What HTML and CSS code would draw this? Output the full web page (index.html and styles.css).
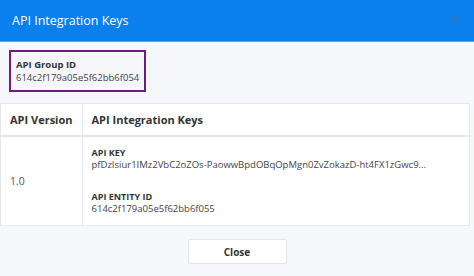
FILE: index.html
```html
<!DOCTYPE html>
<html>
<head>
<meta charset="utf-8">
<link rel="stylesheet" href="styles.css">
</head>
<body>
<div class="modal">
  <div class="modal-header">
    <span class="modal-title">API Integration Keys</span>
    <svg class="close-x" width="9" height="9" viewBox="0 0 9 9"><path d="M1 1 L8 8 M8 1 L1 8" stroke="#3f6ea8" stroke-width="1.6" stroke-linecap="round"/></svg>
  </div>
  <div class="modal-body">
    <div class="group-box">
      <div class="label">API Group ID</div>
      <div class="value">614c2f179a05e5f62bb6f054</div>
    </div>
    <table class="keys-table">
      <thead>
        <tr><th class="col-ver">API Version</th><th>API Integration Keys</th></tr>
      </thead>
      <tbody>
        <tr>
          <td class="col-ver">1.0</td>
          <td class="keys-cell">
            <div class="label">API KEY</div>
            <div class="value">pfDzIsiur1IMz2VbC2oZOs-PaowwBpdOBqOpMgn0ZvZokazD-ht4FX1zGwc9...</div>
            <div class="label entity">API ENTITY ID</div>
            <div class="value">614c2f179a05e5f62bb6f055</div>
          </td>
        </tr>
      </tbody>
    </table>
  </div>
  <div class="modal-footer">
    <button class="btn-close">Close</button>
  </div>
</div>
</body>
</html>
```
FILE: styles.css
```css
html, body {
  margin: 0;
  padding: 0;
  background: #f5f7fa;
  font-family: "Open Sans", "Liberation Sans", sans-serif;
  color: #333;
}
.modal {
  width: 474px;
  height: 276px;
  display: flex;
  flex-direction: column;
  background: #f5f7fa;
}
.modal-header {
  height: 41px;
  background: #0a7fee;
  border-bottom: 1px solid #5aa6f2;
  display: flex;
  align-items: center;
  justify-content: space-between;
  padding: 0 14px 0 12px;
  flex: none;
}
.modal-title {
  color: #fff;
  font-size: 12.5px;
  line-height: 1;
  margin-top: 1px;
}
.close-x {
  opacity: 0.8;
  margin-top: -4px;
}
.modal-body {
  padding: 8px 0 0 0;
}
.group-box {
  margin-left: 9px;
  width: 128px;
  height: 38px;
  border: 2px solid #6c1d7d;
  padding: 0 0 0 5px;
  display: flex;
  flex-direction: column;
  justify-content: center;
}
.group-box .label {
  font-size: 9.5px;
}
.label {
  font-weight: 700;
  font-size: 9px;
  line-height: 12px;
  color: #333;
}
.value {
  font-size: 9.5px;
  line-height: 12px;
  color: #444;
}
.group-box .value {
  line-height: 13px;
}
.keys-table {
  margin-top: 11px;
  width: 470px;
  border-collapse: collapse;
  background: #fff;
  border: 1px solid #e4e7eb;
}
.keys-table th {
  text-align: left;
  font-size: 11px;
  font-weight: 700;
  height: 31px;
  padding: 0 9px;
  border-bottom: 2px solid #e4e7eb;
  color: #333;
  white-space: nowrap;
}
.keys-table .col-ver {
  width: 62px;
  border-right: 1px solid #e4e7eb;
}
.keys-table td {
  font-size: 10px;
  padding: 0 9px;
  height: 88px;
  vertical-align: middle;
}
.keys-table td.col-ver {
  color: #555;
  font-size: 10.5px;
}
.keys-cell .entity {
  margin-top: 20px;
}
.modal-footer {
  flex: 1;
  display: flex;
  justify-content: center;
  align-items: flex-start;
  padding-top: 13px;
}
.btn-close {
  width: 99px;
  height: 25px;
  background: #fff;
  border: 1px solid #e2e5e9;
  border-radius: 2px;
  font-family: "Open Sans", "Liberation Sans", sans-serif;
  font-weight: 700;
  font-size: 10px;
  color: #333;
  padding: 0;
}
```
